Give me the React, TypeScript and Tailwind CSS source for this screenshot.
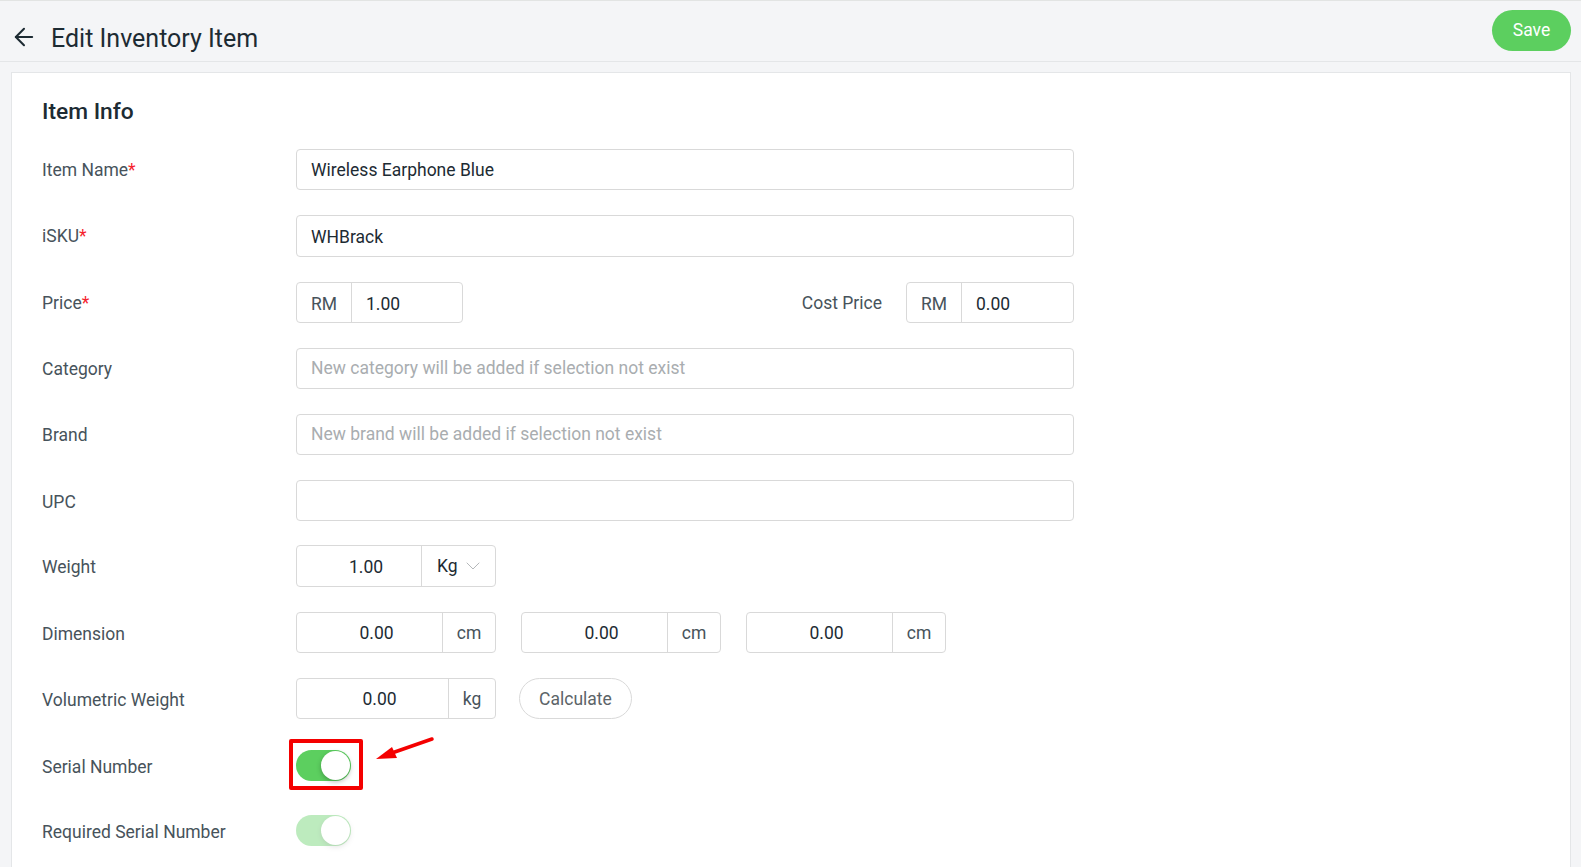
import { ArrowLeft, ChevronDown } from 'lucide-react';
import { ReactNode } from 'react';

const boxClass = 'flex overflow-hidden rounded-[4px] border border-[#d9d9d9] bg-white';

function Row({ label, required, top, className, children }: { label: string; required?: boolean; top?: boolean; className?: string; children: ReactNode }) {
  return (
    <div className={`flex items-center ${className ?? ''}`}>
      <div className={`w-[254px] shrink-0 ${top ? 'pt-[1px]' : 'pt-[3px]'} text-[17.5px] text-[#47535b]`}>
        {label}
        {required && <span className="text-[#f5222d]">*</span>}
      </div>
      {children}
    </div>
  );
}

function TextField({ value, placeholder, tall }: { value?: string; placeholder?: string; tall?: boolean }) {
  return (
    <input
      readOnly
      value={value ?? ''}
      placeholder={placeholder}
      className={`${tall ? 'h-[42px] pt-[2px]' : 'h-[41px]'} ${placeholder ? 'pb-[2px]' : ''} w-[778px] rounded-[4px] border border-[#d9d9d9] bg-white px-[14px] text-[17.5px] text-[#1d2b33] outline-none placeholder:text-[#a9adb0]`}
    />
  );
}

function PriceField({ value, width }: { value: string; width: string }) {
  return (
    <div className={`${boxClass} h-[41px] ${width}`}>
      <div className="flex w-[55px] shrink-0 items-center justify-center border-r border-[#d9d9d9] pt-[3px] text-[17.5px] text-[#47535b]">
        RM
      </div>
      <div className="flex items-center pl-[14px] pt-[3px] text-[17.5px] text-[#1d2b33]">{value}</div>
    </div>
  );
}

function UnitField({ value, unit, unitWidth }: { value: string; unit: string; unitWidth: string }) {
  return (
    <div className={`${boxClass} h-[41px] w-[200px]`}>
      <div className="flex flex-1 items-center justify-center pl-[14px] pt-[2px] text-[17.5px] text-[#1d2b33]">{value}</div>
      <div className={`${unitWidth} flex shrink-0 items-center justify-center border-l border-[#d9d9d9] pt-[2px] text-[17.5px] text-[#47535b]`}>
        {unit}
      </div>
    </div>
  );
}

function Toggle({ faded }: { faded?: boolean }) {
  return (
    <div className={`relative h-[31px] w-[55px] rounded-full bg-[#5ccf5f] ${faded ? 'opacity-40' : ''}`}>
      <div className="absolute right-[1px] top-[1px] h-[29px] w-[29px] rounded-full bg-white shadow-[0_2px_5px_rgba(0,0,0,0.25)]" />
    </div>
  );
}

export default function App() {
  return (
    <div className="h-[867px] w-[1581px] overflow-hidden border-t border-[#e2e4e3] bg-[#f4f5f7] font-['Roboto',sans-serif]">
      {/* Header */}
      <header className="flex h-[61px] items-center justify-between border-b border-[#e4e6e8] pl-[10px] pr-[10px]">
        <div className="flex items-center gap-[13px] pt-[13px] text-[#1d2b33]">
          <ArrowLeft size={28} strokeWidth={1.75} className="-mt-[2px]" />
          <h1 className="pt-[3px] text-[25px] font-normal leading-[30px]">Edit Inventory Item</h1>
        </div>
        <button className="-mt-[1px] h-[41px] w-[79px] rounded-full bg-[#5ccf5f] text-[17.5px] font-normal text-white">Save</button>
      </header>

      {/* Card */}
      <main className="ml-[11px] mr-[10px] mt-[10px] h-[900px] border border-[#e4e6e8] bg-white pl-[30px] pt-[24px]">
        <h2 className="text-[22.75px] font-medium leading-[30px] text-[#1d2b33]">Item Info</h2>

        <div className="mt-[22px] flex flex-col gap-[25px]">
          <Row label="Item Name" required top>
            <TextField value="Wireless Earphone Blue" />
          </Row>
          <Row label="iSKU" required top>
            <TextField value="WHBrack" tall />
          </Row>
          <Row label="Price" required top>
            <div className="flex w-[778px] items-center">
              <PriceField value="1.00" width="w-[167px]" />
              <div className="ml-auto mr-[24px] pt-[2px] text-[17.5px] text-[#47535b]">Cost Price</div>
              <PriceField value="0.00" width="w-[168px]" />
            </div>
          </Row>
          <Row label="Category" top>
            <TextField placeholder="New category will be added if selection not exist" />
          </Row>
          <Row label="Brand" top>
            <TextField placeholder="New brand will be added if selection not exist" />
          </Row>
          <Row label="UPC">
            <TextField />
          </Row>
          <Row label="Weight" className="-mt-[1px]">
            <div className={`${boxClass} h-[42px] w-[200px]`}>
              <div className="flex flex-1 items-center justify-center pl-[14px] pt-[2px] text-[17.5px] text-[#1d2b33]">1.00</div>
              <div className="flex w-[74px] shrink-0 items-center gap-[3px] border-l border-[#d9d9d9] pl-[15px] text-[17.5px] text-[#1d2b33]">
                Kg
                <ChevronDown size={24} strokeWidth={1} className="text-[#b5b8ba]" />
              </div>
            </div>
          </Row>
          <Row label="Dimension">
            <div className="flex gap-[25px]">
              <UnitField value="0.00" unit="cm" unitWidth="w-[53px]" />
              <UnitField value="0.00" unit="cm" unitWidth="w-[53px]" />
              <UnitField value="0.00" unit="cm" unitWidth="w-[53px]" />
            </div>
          </Row>
          <Row label="Volumetric Weight">
            <div className="flex items-center gap-[23px]">
              <UnitField value="0.00" unit="kg" unitWidth="w-[47px]" />
              <button className="h-[41px] w-[113px] rounded-full border border-[#d9d9d9] bg-white pt-[2px] text-[17.5px] text-[#5c6468]">
                Calculate
              </button>
            </div>
          </Row>
          <Row label="Serial Number" className="mt-[6px]">
            <div className="relative">
              <Toggle />
              {/* annotation added on top of the screenshot */}
              <div className="absolute -left-[7px] -top-[11px] h-[51px] w-[74px] rounded-[2px] border-[4px] border-[#f40000]" />
              <svg className="absolute left-[79px] -top-[17px]" width="64" height="32" viewBox="0 0 64 32" fill="none">
                <path d="M57 6 L14 21" stroke="#f40000" strokeWidth="3.5" strokeLinecap="round" />
                <path d="M1 26 L17 14 L22 25 Z" fill="#f40000" />
              </svg>
            </div>
          </Row>
          <Row label="Required Serial Number" className="mt-[9px]">
            <Toggle faded />
          </Row>
        </div>
      </main>
    </div>
  );
}
